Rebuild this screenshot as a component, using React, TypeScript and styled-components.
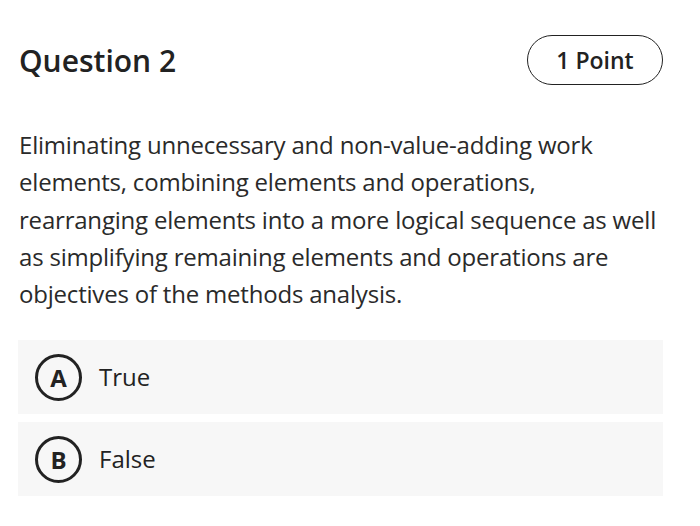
import React from "react";
import styled, { createGlobalStyle } from "styled-components";

const Global = createGlobalStyle`
  html, body { margin: 0; padding: 0; background: #ffffff; }
  body { font-family: "Open Sans", "Liberation Sans", sans-serif; color: #222222; }
`;

const Page = styled.div`
  width: 645px;
  padding: 35px 37px 0 18px;
  display: flex;
  flex-direction: column;
`;

const Header = styled.div`
  display: flex;
  align-items: center;
  justify-content: space-between;
  height: 50px;
`;

const Title = styled.h2`
  margin: 0;
  padding-left: 1px;
  font-size: 30px;
  font-weight: 600;
  color: #222222;
  line-height: 1;
  margin-top: 2px;
`;

const Pill = styled.div`
  box-sizing: border-box;
  height: 50px;
  width: 136px;
  border: 1.5px solid #222222;
  border-radius: 25px;
  display: flex;
  align-items: center;
  justify-content: center;
  font-size: 23px;
  font-weight: 600;
  color: #222222;
`;

const Prompt = styled.p`
  margin: 41px 0 0 0;
  padding-left: 1px;
  font-size: 24px;
  line-height: 37.3px;
  letter-spacing: -0.2px;
  font-weight: 400;
  color: #2a2a2a;
`;

const Options = styled.div`
  margin-top: 28px;
  display: flex;
  flex-direction: column;
  gap: 8px;
`;

const Option = styled.div`
  box-sizing: border-box;
  height: 74px;
  background: #f7f7f7;
  display: flex;
  align-items: center;
  padding-left: 17px;
  gap: 17px;
`;

const Badge = styled.div`
  box-sizing: border-box;
  width: 47px;
  height: 47px;
  border: 3px solid #222222;
  border-radius: 50%;
  display: flex;
  align-items: center;
  justify-content: center;
  font-size: 24px;
  font-weight: 700;
  color: #222222;
`;

const OptionText = styled.span`
  font-size: 24px;
  font-weight: 500;
  color: #222222;
  margin-top: -2px;
`;

const options = [
  { letter: "A", label: "True" },
  { letter: "B", label: "False" },
];

export default function App() {
  return (
    <>
      <Global />
      <Page>
        <Header>
          <Title>Question 2</Title>
          <Pill>1 Point</Pill>
        </Header>
        <Prompt>
          Eliminating unnecessary and non-value-adding work elements, combining elements and operations,
          rearranging elements into a more logical sequence as well as simplifying remaining elements and
          operations are objectives of the methods analysis.
        </Prompt>
        <Options>
          {options.map((o) => (
            <Option key={o.letter}>
              <Badge>{o.letter}</Badge>
              <OptionText>{o.label}</OptionText>
            </Option>
          ))}
        </Options>
      </Page>
    </>
  );
}
